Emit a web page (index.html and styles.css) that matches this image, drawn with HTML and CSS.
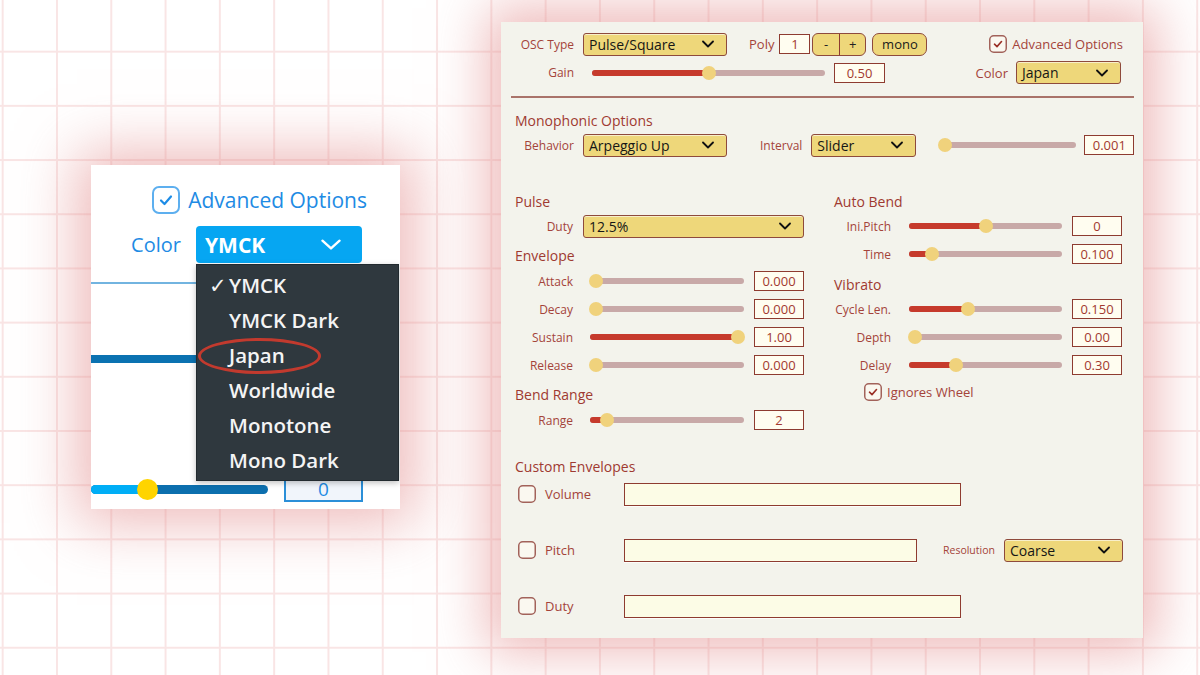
FILE: index.html
```html
<!DOCTYPE html>
<html lang="en">
<head>
<meta charset="utf-8">
<title>Color themes</title>
<link rel="stylesheet" href="styles.css">
</head>
<body>
<div class="canvas">

  <!-- Left: zoomed YMCK theme -->
  <div class="shot ymck">
    <div class="y-adv">
      <span class="y-cb"><svg viewBox="0 0 28 28" width="28" height="28"><rect x="1" y="1" width="26" height="26" rx="6" fill="#fff" stroke="#5dafef" stroke-width="2"/><path d="M9 14.5 L12.5 18 L19 10.5" fill="none" stroke="#1d8ce6" stroke-width="2.2" stroke-linecap="round" stroke-linejoin="round"/></svg></span>
      <span class="y-adv-text">Advanced Options</span>
    </div>
    <div class="y-color">
      <span class="y-color-lbl">Color</span>
      <div class="y-select"><span>YMCK</span><svg viewBox="0 0 24 14" width="22" height="12"><path d="M2 2 L12 11 L22 2" fill="none" stroke="#fff" stroke-width="2.8" stroke-linecap="round" stroke-linejoin="round"/></svg></div>
    </div>
    <div class="y-line"></div>
    <div class="y-bar"></div>
    <div class="y-bottom">
      <div class="y-slider"><div class="y-track"></div><div class="y-fill"></div><div class="y-thumb"></div></div>
      <div class="y-num">0</div>
    </div>

    <div class="y-menu">
      <div class="y-item"><span class="y-check">✓</span>YMCK</div>
      <div class="y-item">YMCK Dark</div>
      <div class="y-item">Japan</div>
      <div class="y-item">Worldwide</div>
      <div class="y-item">Monotone</div>
      <div class="y-item">Mono Dark</div>
    </div>
    <div class="y-ring"></div>
  </div>

  <!-- Right: Japan theme panel -->
  <div class="shot japan">
    <div class="row r1">
      <span class="lbl w73">OSC Type</span>
      <div class="sel w144 ml9"><span>Pulse/Square</span><svg class="chev" viewBox="0 0 12 8" width="12" height="8"><path d="M1 1.5 L6 6.5 L11 1.5" fill="none" stroke="#111" stroke-width="1.8" stroke-linecap="round" stroke-linejoin="round"/></svg></div>
      <span class="lbl lbl13 poly">Poly</span>
      <div class="num w31 ml5">1</div>
      <div class="btngrp"><span class="bg-btn">-</span><span class="bg-btn">+</span></div>
      <div class="btn mono">mono</div>
      <div class="adv">
        <span class="cb on"><svg viewBox="0 0 18 18" width="18" height="18"><rect x="0.75" y="0.75" width="16.5" height="16.5" rx="4" fill="#faf8f0" stroke="#a2625a" stroke-width="1.5"/><path d="M5.5 9.2 L8 11.6 L12.5 6.5" fill="none" stroke="#9a2f25" stroke-width="1.6" stroke-linecap="round" stroke-linejoin="round"/></svg></span>
        <span class="lbl lbl13">Advanced Options</span>
      </div>
    </div>
    <div class="row r2">
      <span class="lbl w73">Gain</span>
      <div class="slider w233 ml18" style="--v:0.5"><div class="track"></div><div class="fill"></div><div class="thumb"></div></div>
      <div class="num w51 ml9">0.50</div>
      <div class="colorpick">
        <span class="lbl lbl13">Color</span>
        <div class="sel w105 ml8"><span>Japan</span><svg class="chev" viewBox="0 0 12 8" width="12" height="8"><path d="M1 1.5 L6 6.5 L11 1.5" fill="none" stroke="#111" stroke-width="1.8" stroke-linecap="round" stroke-linejoin="round"/></svg></div>
      </div>
    </div>
    <div class="divider"></div>

    <div class="hdr mono-hdr">Monophonic Options</div>
    <div class="row r3">
      <span class="lbl w73">Behavior</span>
      <div class="sel w144 ml9"><span>Arpeggio Up</span><svg class="chev" viewBox="0 0 12 8" width="12" height="8"><path d="M1 1.5 L6 6.5 L11 1.5" fill="none" stroke="#111" stroke-width="1.8" stroke-linecap="round" stroke-linejoin="round"/></svg></div>
      <span class="lbl interval">Interval</span>
      <div class="sel w105 ml9"><span>Slider</span><svg class="chev" viewBox="0 0 12 8" width="12" height="8"><path d="M1 1.5 L6 6.5 L11 1.5" fill="none" stroke="#111" stroke-width="1.8" stroke-linecap="round" stroke-linejoin="round"/></svg></div>
      <div class="slider w137 ml23" style="--v:0"><div class="track"></div><div class="fill"></div><div class="thumb"></div></div>
      <div class="num w50 ml8">0.001</div>
    </div>

    <div class="cols">
      <div class="col lcol">
        <div class="hdr">Pulse</div>
        <div class="row prow">
          <span class="lbl w72">Duty</span>
          <div class="sel w221 ml10"><span>12.5%</span><svg class="chev" viewBox="0 0 12 8" width="12" height="8"><path d="M1 1.5 L6 6.5 L11 1.5" fill="none" stroke="#111" stroke-width="1.8" stroke-linecap="round" stroke-linejoin="round"/></svg></div>
        </div>
        <div class="hdr env">Envelope</div>
        <div class="row srow">
          <span class="lbl w72">Attack</span>
          <div class="slider w154 ml17" style="--v:0"><div class="track"></div><div class="fill"></div><div class="thumb"></div></div>
          <div class="num w50 ml10">0.000</div>
        </div>
        <div class="row srow">
          <span class="lbl w72">Decay</span>
          <div class="slider w154 ml17" style="--v:0"><div class="track"></div><div class="fill"></div><div class="thumb"></div></div>
          <div class="num w50 ml10">0.000</div>
        </div>
        <div class="row srow">
          <span class="lbl w72">Sustain</span>
          <div class="slider w154 ml17" style="--v:1"><div class="track"></div><div class="fill"></div><div class="thumb"></div></div>
          <div class="num w50 ml10">1.00</div>
        </div>
        <div class="row srow">
          <span class="lbl w72">Release</span>
          <div class="slider w154 ml17" style="--v:0"><div class="track"></div><div class="fill"></div><div class="thumb"></div></div>
          <div class="num w50 ml10">0.000</div>
        </div>
        <div class="hdr bend">Bend Range</div>
        <div class="row srow">
          <span class="lbl w72">Range</span>
          <div class="slider w154 ml17" style="--v:0.08"><div class="track"></div><div class="fill"></div><div class="thumb"></div></div>
          <div class="num w50 ml10">2</div>
        </div>
      </div>

      <div class="col rcol">
        <div class="hdr">Auto Bend</div>
        <div class="row srow">
          <span class="lbl w71">Ini.Pitch</span>
          <div class="slider w153 ml18" style="--v:0.5"><div class="track"></div><div class="fill"></div><div class="thumb"></div></div>
          <div class="num w50 ml10">0</div>
        </div>
        <div class="row srow">
          <span class="lbl w71">Time</span>
          <div class="slider w153 ml18" style="--v:0.12"><div class="track"></div><div class="fill"></div><div class="thumb"></div></div>
          <div class="num w50 ml10">0.100</div>
        </div>
        <div class="hdr vib">Vibrato</div>
        <div class="row srow">
          <span class="lbl w71">Cycle Len.</span>
          <div class="slider w153 ml18" style="--v:0.375"><div class="track"></div><div class="fill"></div><div class="thumb"></div></div>
          <div class="num w50 ml10">0.150</div>
        </div>
        <div class="row srow">
          <span class="lbl w71">Depth</span>
          <div class="slider w153 ml18" style="--v:0"><div class="track"></div><div class="fill"></div><div class="thumb"></div></div>
          <div class="num w50 ml10">0.00</div>
        </div>
        <div class="row srow">
          <span class="lbl w71">Delay</span>
          <div class="slider w153 ml18" style="--v:0.29"><div class="track"></div><div class="fill"></div><div class="thumb"></div></div>
          <div class="num w50 ml10">0.30</div>
        </div>
        <div class="row wheel">
          <span class="cb on"><svg viewBox="0 0 18 18" width="18" height="18"><rect x="0.75" y="0.75" width="16.5" height="16.5" rx="4" fill="#faf8f0" stroke="#a2625a" stroke-width="1.5"/><path d="M5.5 9.2 L8 11.6 L12.5 6.5" fill="none" stroke="#9a2f25" stroke-width="1.6" stroke-linecap="round" stroke-linejoin="round"/></svg></span>
          <span class="lbl lbl13 ml5">Ignores Wheel</span>
        </div>
      </div>
    </div>

    <div class="hdr custom-hdr">Custom Envelopes</div>
    <div class="row crow">
      <span class="cb"><svg viewBox="0 0 18 18" width="18" height="18"><rect x="0.75" y="0.75" width="16.5" height="16.5" rx="4" fill="#faf8f0" stroke="#a2625a" stroke-width="1.5"/></svg></span>
      <span class="lbl lbl13 clbl">Volume</span>
      <div class="field w337"></div>
    </div>
    <div class="row crow">
      <span class="cb"><svg viewBox="0 0 18 18" width="18" height="18"><rect x="0.75" y="0.75" width="16.5" height="16.5" rx="4" fill="#faf8f0" stroke="#a2625a" stroke-width="1.5"/></svg></span>
      <span class="lbl lbl13 clbl">Pitch</span>
      <div class="field w293"></div>
      <span class="lbl lbl11 res">Resolution</span>
      <div class="sel w119 ml9"><span>Coarse</span><svg class="chev" viewBox="0 0 12 8" width="12" height="8"><path d="M1 1.5 L6 6.5 L11 1.5" fill="none" stroke="#111" stroke-width="1.8" stroke-linecap="round" stroke-linejoin="round"/></svg></div>
    </div>
    <div class="row crow">
      <span class="cb"><svg viewBox="0 0 18 18" width="18" height="18"><rect x="0.75" y="0.75" width="16.5" height="16.5" rx="4" fill="#faf8f0" stroke="#a2625a" stroke-width="1.5"/></svg></span>
      <span class="lbl lbl13 clbl">Duty</span>
      <div class="field w337"></div>
    </div>
  </div>

</div>
</body>
</html>
```
FILE: styles.css
```css
* { box-sizing: border-box; }
html, body { margin: 0; padding: 0; }
body {
  width: 1200px;
  height: 675px;
  overflow: hidden;
  font-family: "Open Sans", "DejaVu Sans", sans-serif;
  background-color: #ffffff;
  background-image:
    linear-gradient(to right, #f9e5e5 0, #f9e5e5 2px, transparent 2px),
    linear-gradient(to bottom, #f9e5e5 0, #f9e5e5 2px, transparent 2px);
  background-size: 54.3px 54.2px;
  background-position: 1.7px -3.5px;
}
.canvas { position: relative; width: 1200px; height: 675px; }

.shot { position: absolute; }

/* ---------- Left: YMCK zoom ---------- */
.ymck {
  left: 91px; top: 165px; width: 309px; height: 344px;
  background: #ffffff;
  box-shadow: 0 0 55px 14px rgba(226, 140, 140, 0.6);
  display: flex; flex-direction: column;
  overflow: hidden;
}
.y-adv {
  margin-top: 21px; height: 28px;
  display: flex; align-items: center; justify-content: flex-end;
  padding-right: 33px; gap: 8px;
}
.y-cb { display: block; width: 28px; height: 28px; }
.y-cb svg { display: block; }
.y-adv-text { font-size: 21px; color: #1e8be4; line-height: 28px; }
.y-color {
  margin-top: 12px; height: 37px;
  display: flex; align-items: center; justify-content: flex-end;
  padding-right: 38px;
}
.y-color-lbl { font-size: 20px; color: #1e8be4; margin-right: 15px; }
.y-select {
  width: 166px; height: 37px; border-radius: 4px;
  background: #06a6f2;
  display: flex; align-items: center; justify-content: space-between;
  padding: 0 20px 0 9px;
  color: #fff; font-weight: 700; font-size: 21px;
}
.y-select svg { display: block; }
.y-line { margin-top: 19px; width: 105px; height: 2px; background: #72b4e0; }
.y-bar { margin-top: 71px; width: 105px; height: 8px; background: #0b72b1; }
.y-bottom { margin-top: 113px; display: flex; align-items: center; height: 26px; }
.y-slider { position: relative; width: 177px; height: 22px; }
.y-track { position: absolute; left: 0; right: 0; top: 7px; height: 9px; border-radius: 5px; background: #0c6fae; }
.y-fill { position: absolute; left: 0; width: 58px; top: 7px; height: 9px; border-radius: 5px 0 0 5px; background: #00aef6; }
.y-thumb { position: absolute; left: 46px; top: 1px; width: 21px; height: 21px; border-radius: 50%; background: #ffd400; }
.y-num {
  margin-left: 16px; width: 79px; height: 26px;
  border: 2px solid #2b8fd8; background: #f1f5fb;
  color: #1e8be4; font-size: 19px; line-height: 22px; text-align: center;
}
.y-menu {
  position: absolute; left: 105px; top: 99px; width: 203px; height: 217px;
  background: #2f383e;
  border: 1px solid #222a2f;
  box-shadow: 0 2px 6px rgba(0,0,0,0.25);
  padding-top: 3px;
}
.y-item {
  height: 35px; line-height: 35px;
  padding-left: 32px; position: relative;
  color: #f4f4f4; font-size: 20.5px; font-weight: 600;
}
.y-check { position: absolute; left: 12px; top: 1px; font-family: "DejaVu Sans", sans-serif; font-weight: 700; font-size: 21px; }
.y-ring {
  position: absolute; left: 107px; top: 173px; width: 123px; height: 36px;
  border: 3px solid #c23a2e; border-radius: 50%;
}

/* ---------- Right: Japan panel ---------- */
.japan {
  left: 501px; top: 22px; width: 642px; height: 616px;
  background: #f3f3ec;
  box-shadow: 0 0 50px 14px rgba(226, 140, 140, 0.6);
  display: flex; flex-direction: column;
}
.row { display: flex; align-items: center; }
.lbl { font-size: 12px; color: #a4433a; white-space: nowrap; }
.lbl13 { font-size: 13px; }
.lbl11 { font-size: 10.5px; }
.w71 { width: 71px; text-align: right; flex: none; }
.w72 { width: 72px; text-align: right; flex: none; }
.w73 { width: 73px; text-align: right; flex: none; }

.ml5 { margin-left: 5px; }
.ml8 { margin-left: 8px; }
.ml9 { margin-left: 9px; }
.ml10 { margin-left: 10px; }
.ml17 { margin-left: 17px; }
.ml18 { margin-left: 18px; }
.ml23 { margin-left: 23px; }

.sel {
  height: 23px; flex: none;
  background: #eed77a;
  border: 1px solid #8e4a3c;
  border-radius: 3px;
  box-shadow: 0 1px 0 rgba(255,255,255,0.6) inset;
  display: flex; align-items: center; justify-content: space-between;
  padding: 0 12px 0 5px;
  font-size: 14px; color: #161616;
}
.chev { display: block; }
.w105 { width: 105px; }
.w119 { width: 119px; }
.w144 { width: 144px; }
.w221 { width: 221px; }

.num {
  height: 20px; flex: none;
  background: #fffdf0;
  border: 1px solid #8e3b30;
  font-size: 13px; color: #a2392f;
  line-height: 18px; text-align: center;
}
.w31 { width: 31px; }
.w50 { width: 50px; }
.w51 { width: 51px; }

.r1 { margin-top: 10px; height: 24px; padding-right: 20px; }
.poly { margin-left: 22px; }
.btngrp {
  margin-left: 2px; width: 54px; height: 23px;
  display: flex;
  background: #eed77a; border: 1px solid #8e4a3c; border-radius: 6px;
}
.bg-btn { flex: 1; text-align: center; font-size: 13px; line-height: 21px; color: #222; }
.bg-btn + .bg-btn { border-left: 1.5px solid #8e3b30; }
.btn.mono {
  margin-left: 6px; width: 55px; height: 23px;
  background: #eed77a; border: 1px solid #8e4a3c; border-radius: 7px;
  text-align: center; font-size: 13px; font-weight: 400; line-height: 21px; color: #1a1a1a;
}
.adv { margin-left: auto; display: flex; align-items: center; gap: 5px; }
.cb { display: block; width: 18px; height: 18px; flex: none; }
.cb svg { display: block; }

.r2 { margin-top: 5px; height: 23px; padding-right: 22px; }
.colorpick { margin-left: auto; display: flex; align-items: center; }

.slider { position: relative; height: 14px; flex: none; }
.w137 { width: 137px; }
.w153 { width: 153px; }
.w154 { width: 154px; }
.w233 { width: 233px; }
.slider .track { position: absolute; left: 0; right: 0; top: 4px; height: 6px; border-radius: 3px; background: #c8a9a8; }
.slider .fill { position: absolute; left: 0; top: 4px; height: 6px; border-radius: 3px; background: #c63a2c; width: calc(6px + var(--v) * (100% - 12px)); }
.slider .thumb { position: absolute; top: 0; width: 14px; height: 14px; border-radius: 50%; background: #f0d27c; left: calc(var(--v) * (100% - 12px) - 1px); }

.divider { margin: 12px 9px 0 10px; height: 2px; background: #a9736a; }

.hdr { font-size: 14px; color: #9f3a31; padding-left: 14px; line-height: 18px; }
.mono-hdr { margin-top: 14px; }
.r3 { margin-top: 3px; height: 24px; }
.interval { margin-left: 33px; }

.cols { display: flex; margin-top: 36px; }
.col { width: 319px; display: flex; flex-direction: column; }
.rcol { width: 323px; }
.prow { margin-top: 3px; height: 24px; }
.hdr.env { margin-top: 9px; }
.srow { height: 20px; margin-top: 8px; }
.col .hdr + .srow { margin-top: 5px; }
.lcol .hdr + .srow { margin-top: 6px; }
.hdr.bend { margin-top: 11px; }
.hdr.vib { margin-top: 12px; }
.wheel { margin-top: 8px; padding-left: 44px; height: 18px; }

.custom-hdr { margin-top: 28px; }
.crow { height: 24px; margin-top: 6px; padding-left: 17px; }
.crow + .crow { margin-top: 32px; }
.clbl { width: 88px; padding-left: 9px; }
.field {
  height: 23px; flex: none;
  background: #fcfce6;
  border: 1px solid #8e3b30;
  box-shadow: 0 1px 0 rgba(255,255,255,0.8);
}
.w293 { width: 293px; }
.w337 { width: 337px; }
.res { margin-left: 26px; }
```
